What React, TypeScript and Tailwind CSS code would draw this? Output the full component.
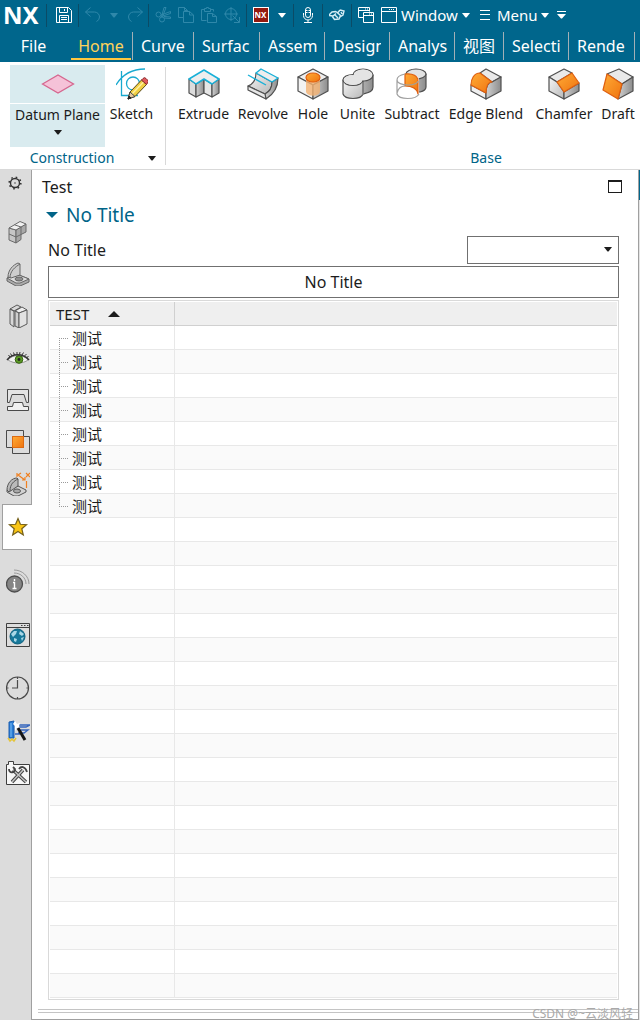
import type { ReactNode } from 'react'

type IconProps = { size?: number; box?: string; className?: string; children: ReactNode }

function Icon({ size = 16, box, className = '', children }: IconProps) {
  return (
    <svg
      width={size}
      height={size}
      viewBox={box ?? `0 0 ${size} ${size}`}
      fill="none"
      stroke="currentColor"
      className={`shrink-0 ${className}`}
      aria-hidden="true"
    >
      {children}
    </svg>
  )
}

function Caret({ className = '' }: { className?: string }) {
  return (
    <svg width="8" height="5" viewBox="0 0 8 5" className={`shrink-0 ${className}`} aria-hidden="true">
      <path d="M0 0h8L4.5 4.5h-1z" fill="currentColor" />
    </svg>
  )
}

function Separator() {
  return <span className="h-[23px] w-px shrink-0 bg-[#0b4b66]" />
}

function Gradients() {
  return (
    <svg width="0" height="0" className="absolute" aria-hidden="true">
      <defs>
        <linearGradient id="metal" x1="0" y1="0" x2="1" y2="1">
          <stop offset="0" stopColor="#f6f6f6" />
          <stop offset="1" stopColor="#b8b8b8" />
        </linearGradient>
        <linearGradient id="shade" x1="0" y1="0" x2="1" y2="0">
          <stop offset="0" stopColor="#d2d2d2" />
          <stop offset="1" stopColor="#8c8c8c" />
        </linearGradient>
        <linearGradient id="orange" x1="0" y1="0" x2="1" y2="1">
          <stop offset="0" stopColor="#ffab36" />
          <stop offset="1" stopColor="#ef7410" />
        </linearGradient>
      </defs>
    </svg>
  )
}

function TitleBar() {
  return (
    <div className="flex h-[30px] items-center overflow-hidden whitespace-nowrap text-[15px] text-white">
      <span className="w-[46px] shrink-0 pl-[3px] text-2xl leading-[30px] font-bold">NX</span>
      <Separator />
      <button aria-label="Save" className="flex w-[31px] shrink-0 justify-center pl-0.5">
        <Icon>
          <path d="M.5.5h12l3 3v12H.5zM3.500.5v5h8v-5M8.500 2v2M3.500 15.500v-7h9v7M5 10.500h6M5 12.500h6" />
        </Icon>
      </button>
      <Separator />
      <button aria-label="Undo" className="flex w-[27px] shrink-0 justify-center text-[#2f88aa]">
        <Icon>
          <path d="M5.500.5l-5 4.500 5 4.500M.5 5h9a5 5 0 0 1 5 5v0a5 5 0 0 1-3 4.500" />
        </Icon>
      </button>
      <button aria-label="Undo list" className="flex w-[15px] shrink-0 justify-center text-[#2f88aa]">
        <Caret />
      </button>
      <button aria-label="Redo" className="flex w-[27px] shrink-0 justify-center text-[#2f88aa]">
        <Icon>
          <path d="M10.500.5l5 4.500-5 4.500M15.500 5h-9a5 5 0 0 0-5 5v0a5 5 0 0 0 3 4.500" />
        </Icon>
      </button>
      <Separator />
      <div className="flex w-[97px] shrink-0 items-center justify-center gap-[7px] text-[#2f88aa]">
        <button aria-label="Cut">
          <Icon>
            <circle cx="3.500" cy="7.500" r="2.500" />
            <circle cx="7" cy="12.500" r="2.500" />
            <path d="M6 8l9.500-3.500v2L6 9.500M7.500 10L11 .5h-2L6.500 10M9 9.500l6.500.5v1.500L9 11" />
          </Icon>
        </button>
        <button aria-label="Copy">
          <Icon>
            <path d="M5.500 10.500h-5V.5h6l3 3v1M6.500.5v3h3M5.500 4.500h6l4 3.500v7.500h-10zM11.500 4.500V8h4" />
          </Icon>
        </button>
        <button aria-label="Paste">
          <Icon>
            <path d="M5.500 13.500h-5v-11h3M9.500 2.500h3v2M3.500 4.500v-3h2v-1h2v1h2v3zM6.500 6.500h5l4 3v6h-9zM11.500 6.500v3h4" />
          </Icon>
        </button>
        <button aria-label="Snap point">
          <Icon>
            <circle cx="7" cy="7" r="5.500" />
            <path d="M7 0v14M0 7h14M8.500 8.500l6.500 6.500M10 15.500h5.500V10" />
          </Icon>
        </button>
      </div>
      <Separator />
      <button aria-label="NX tools" className="flex w-[27px] shrink-0 justify-center">
        <span className="flex size-4 items-center justify-center border border-white bg-[#931a10] text-[8px] leading-none font-bold">
          NX
        </span>
      </button>
      <button aria-label="NX tools list" className="mr-1 flex w-[15px] shrink-0 justify-center">
        <Caret />
      </button>
      <Separator />
      <button aria-label="Voice command" className="flex w-7 shrink-0 justify-center">
        <Icon>
          <path d="M5.500 3a2.500 2.500 0 0 1 5 0v5a2.500 2.500 0 0 1-5 0zM5.500 3.500h2M5.500 5.500h2M8.500 3.500h2M8.500 5.500h2M3.500 6v2.500a4.500 4.500 0 0 0 9 0V6M8 13v2.500M4 15.500h8" />
        </Icon>
      </button>
      <Separator />
      <button aria-label="Touch mode" className="flex w-7 shrink-0 justify-center text-[#d5edf5]">
        <Icon>
          <path d="M0 8l3-3 4-.5M0 8.500l4 .5 3-2.500M3 9l2.500 3.500L10 12l1.500-3.500L7 4.500M6 8l3 3M11 3l4 1-1 4-3 2M11 3L9 5.500M12 5l1 2" strokeWidth="1.400" />
        </Icon>
      </button>
      <Separator />
      <button aria-label="Switch window" className="flex w-[26px] shrink-0 justify-center pl-0.5">
        <Icon>
          <path d="M5 10.500H.5V.5h11v4M.5 3.500h11M5.500 5.500h10v10h-10zM5.500 8.500h10M7 2h1M9 2h1M11 7h1M13 7h1" />
        </Icon>
      </button>
      <button className="flex w-[98px] shrink-0 items-center gap-1 pl-[3px]">
        <Icon>
          <path d="M.5.5h15v15H.5zM.5 4.500h15M8 2.500h1M10 2.500h1M12 2.500h1" />
        </Icon>
        <span className="w-[57px] text-left">Window</span>
        <Caret />
      </button>
      <button className="flex shrink-0 items-center pl-1">
        <Icon size={10} box="0 0 10 10">
          <path d="M0 .5h10M0 4.500h10M0 9.500h10" />
        </Icon>
        <span className="ml-[7px] w-11 text-left">Menu</span>
        <Caret />
      </button>
      <button aria-label="Customize toolbar" className="ml-2 shrink-0">
        <svg width="9" height="8" viewBox="0 0 9 8" aria-hidden="true">
          <path d="M0 0h9v1H0zM0 3h9L5 7.500H4z" fill="currentColor" />
        </svg>
      </button>
    </div>
  )
}

const tabs = [
  { label: 'Curve', width: 'w-[61px] pr-2' },
  { label: 'Surfac', width: 'w-[66px] pr-2' },
  { label: 'Assem', width: 'w-[65px] pr-1' },
  { label: 'Design', width: 'w-[65px] pr-2' },
  { label: 'Analys', width: 'w-[65px] pr-1' },
  { label: '视图', width: 'w-[49px] pr-2' },
  { label: 'Selecti', width: 'w-[65px] pr-2' },
  { label: 'Rende', width: 'w-[66px] pr-2' },
]

function TabBar() {
  return (
    <nav className="flex h-8 items-start overflow-hidden pt-px text-base leading-[30px] whitespace-nowrap text-white">
      <button className="w-[71px] shrink-0 pr-1">File</button>
      <button className="h-[29px] w-[60px] shrink-0 border-b-2 border-[#ffc840] text-[#ffd25a]">Home</button>
      <span className="mt-px ml-px h-7 w-px shrink-0 bg-[#a3b0b6]" />
      {tabs.map((tab) => (
        <button
          key={tab.label}
          className={`mt-px h-7 shrink-0 border-r border-[#a3b0b6] pl-2 text-left leading-7 ${tab.width}`}
        >
          <span className="block overflow-hidden">{tab.label}</span>
        </button>
      ))}
    </nav>
  )
}

const edge = { stroke: '#505050', strokeWidth: 1.2, strokeLinejoin: 'round' as const }
const cut = { fill: 'url(#orange)', stroke: '#df5f10' }

function SketchIcon() {
  return (
    <Icon size={32}>
      <path d="M5.500 3v24.500H22M0 17C6 7 15 1 29 1" stroke="#18a9cf" strokeWidth="1.300" />
      <circle cx="17" cy="15.500" r="6.500" stroke="#18a9cf" strokeWidth="1.300" />
      <path d="M14 24L25.500 12l5 4.500L19 28.500 12 31z" fill="#f1cf43" stroke="#5a4a1a" />
      <path d="M16 26L27.500 14" stroke="#fff0a0" strokeWidth="1.500" />
      <path d="M14 24l5 4.500L12 31z" fill="#e8c9a0" stroke="#444" />
      <path d="M12 31l1-3 2 2z" fill="#222" stroke="#222" />
      <path d="M25.500 12l1.500-1.500a2 2 0 0 1 3 0l1.500 1.500a2 2 0 0 1 0 3l-1 1.500z" fill="#e0595c" stroke="#8a2a2c" />
    </Icon>
  )
}

const baseTools = [
  {
    label: 'Extrude',
    width: 'w-[59px]',
    icon: (
      <g {...edge}>
        <path d="M1 11l7 5v13l-7-4z" fill="#dcdcdc" />
        <path d="M8 16l8-5v14l-8 4z" fill="url(#shade)" />
        <path d="M16 11l8 5v13l-8-4z" fill="#e6e6e6" />
        <path d="M31 11l-7 5v13l7-4z" fill="url(#shade)" />
        <path d="M1 11l15-9 15 9-7 5-8-5-8 5z" fill="#eee" stroke="#18b0d8" strokeWidth="1.500" />
      </g>
    ),
  },
  {
    label: 'Revolve',
    width: 'w-[60px]',
    icon: (
      <g {...edge}>
        <path d="M9 5l16 9c0 6-3 10-7 12L1 18c5-2 8-7 8-13z" fill="url(#metal)" />
        <path d="M25 14l6-4c0 9-4 16-12 21l-1-5c4-2 7-6 7-12z" fill="url(#shade)" />
        <path d="M1 18l17 8 1 5L1 22z" fill="#e8e8e8" />
        <path d="M9 5l5-4 17 9-6 4z" fill="#eee" stroke="#18b0d8" strokeWidth="1.400" />
        <path d="M1 7l18 10" stroke="#18b0d8" strokeWidth="1.400" />
      </g>
    ),
  },
  {
    label: 'Hole',
    width: 'w-[40px]',
    icon: (
      <g {...edge}>
        <path d="M16 1l15 8-15 8L1 9z" fill="#eee" />
        <path d="M1 9l15 8v14L1 23z" fill="#f2f2f2" />
        <path d="M31 9l-15 8v14l15-8z" fill="url(#shade)" />
        <path d="M9 10v14c2 5 12 5 14 0V10z" fill="#f2b071" fillOpacity=".8" stroke="none" />
        <ellipse cx="16" cy="9.500" rx="7" ry="4.500" {...cut} />
      </g>
    ),
  },
  {
    label: 'Unite',
    width: 'w-[49px]',
    icon: (
      <g {...edge}>
        <path d="M11 7v17c4 4 20 2 20-5V7z" fill="url(#shade)" />
        <path d="M1 12v14c2 6 18 6 20 0V12z" fill="url(#metal)" />
        <path d="M21 14v13" stroke="#8a8a8a" />
        <ellipse cx="21" cy="7" rx="10" ry="6" />
        <ellipse cx="11" cy="12" rx="10" ry="5.500" />
        <g fill="#e4e4e4" stroke="none">
          <ellipse cx="21" cy="7" rx="9.400" ry="5.400" />
          <ellipse cx="11" cy="12" rx="9.400" ry="4.900" />
        </g>
      </g>
    ),
  },
  {
    label: 'Subtract',
    width: 'w-[60px]',
    icon: (
      <g {...edge}>
        <path d="M10 6v18h14c4-1 6-3 6-5V6z" fill="url(#shade)" />
        <ellipse cx="20" cy="6" rx="10" ry="5" fill="#e2e2e2" />
        <path d="M1 12C1 4 23 4 23 12v14c-2 6-20 6-22 0z" fill="#fff" stroke="none" />
        <path d="M9 6c8-1 13 2 13 7v13c-1-5-6-8-13-8z" {...cut} />
        <path d="M9 6C4 7 1 9 1 12v14c2 6 19 6 22 0M1 12c0 3 5 5 11 5s10-2 10-4M1 25c1-4 4-7 8-7" stroke="#a0a0a0" />
      </g>
    ),
  },
  {
    label: 'Edge Blend',
    width: 'w-[88px]',
    icon: (
      <g {...edge}>
        <path d="M16 1l15 8-9 5-12-9z" fill="#e9e9e9" />
        <path d="M1 17v6l15 8v-6z" fill="#f0f0f0" />
        <path d="M31 9v14l-15 8v-6c0-6 2-11 6-11z" fill="url(#shade)" />
        <path d="M10 5l12 9c-4 0-6 5-6 11L1 17C1 11 4 5 10 5z" {...cut} />
      </g>
    ),
  },
  {
    label: 'Chamfer',
    width: 'w-[68px]',
    icon: (
      <g {...edge}>
        <path d="M16 1l8 4-15 9-8-5z" fill="#e9e9e9" />
        <path d="M1 9l8 5 7 10v7L1 23z" fill="url(#metal)" />
        <path d="M31 15v8l-15 8v-7z" fill="url(#shade)" />
        <path d="M24 5l7 10-15 9-7-10z" {...cut} />
      </g>
    ),
  },
  {
    label: 'Draft',
    width: 'w-[40px]',
    icon: (
      <g {...edge}>
        <path d="M17 1l14 8-11 7L5 6z" fill="#e9e9e9" />
        <path d="M31 9v14l-15 8 4-15z" fill="url(#shade)" />
        <path d="M5 6l15 10-4 15-15-9z" {...cut} />
      </g>
    ),
  },
]

function Ribbon() {
  return (
    <div className="flex h-[107px] overflow-hidden text-sm whitespace-nowrap text-[#1c1c1c]">
      <div className="w-[165px] shrink-0 pt-[3px] pl-[10px]">
        <div className="flex items-start">
          <button className="flex h-[82px] w-[95px] flex-col items-center bg-[#d9ebef]">
            <span className="flex h-[39px] w-full items-center justify-center border-b border-white">
              <svg width="34" height="20" viewBox="0 0 34 20" aria-hidden="true">
                <path d="M1.500 10L17 1l15.500 9L17 19z" fill="#f5c2d8" stroke="#d5678f" strokeWidth="1.300" />
              </svg>
            </span>
            <span className="leading-[22px]">Datum Plane</span>
            <Caret className="mt-1" />
          </button>
          <button className="flex w-[53px] flex-col items-center pt-[3px]">
            <SketchIcon />
            <span className="mt-[3px] leading-[22px]">Sketch</span>
          </button>
        </div>
        <div className="mt-px flex h-5 items-center text-[#006488]">
          <span className="w-[125px] pr-px text-center leading-5">Construction</span>
          <button aria-label="Construction options" className="ml-[13px] text-[#1c1c1c]">
            <Caret />
          </button>
        </div>
      </div>
      <span className="mt-[5px] h-[98px] w-px shrink-0 bg-[#d9d9d9]" />
      <div className="flex flex-1 flex-col pt-[6px] pl-2">
        <div className="flex">
          {baseTools.map((tool) => (
            <button key={tool.label} className={`flex shrink-0 flex-col items-center ${tool.width}`}>
              <Icon size={32}>{tool.icon}</Icon>
              <span className="mt-[3px] leading-[22px]">{tool.label}</span>
            </button>
          ))}
        </div>
        <span className="mt-[23px] w-[624px] text-center leading-5 text-[#006488]">Base</span>
      </div>
    </div>
  )
}

const sideItems = [
  {
    label: 'Settings',
    height: 'mb-[15px] h-[26px]',
    icon: (
      <g stroke="#333" strokeWidth="1.400">
        <circle cx="9" cy="12" r="4.500" />
        <circle cx="9" cy="12" r="5.800" strokeWidth="1.600" strokeDasharray="1.600 2.955" />
        <path d="M8.500 12h1" />
      </g>
    ),
  },
  {
    label: 'Assembly navigator',
    height: 'h-[42px]',
    icon: (
      <g stroke="#6a6a6a" strokeLinejoin="round">
        <path d="M3 8l7 2v13l-7-3z" fill="#c6c6c6" />
        <path d="M10 10l10-6v8l-5 2.500v5L10 23z" fill="#a8a8a8" />
        <path d="M3 8l11-6.500L20 4l-10 6z" fill="#f0f0f0" />
        <path d="M3 14l7 3 5-2.500V7L8.500 4.800" />
      </g>
    ),
  },
  {
    label: 'Part navigator',
    height: 'h-[42px]',
    icon: (
      <g stroke="#666" strokeLinejoin="round">
        <path d="M1 16l12-3 10 4v3l-9 4h-4l-9-5z" fill="#ababab" />
        <path d="M1 16l12-3 10 4-9 4h-4z" fill="#dcdcdc" />
        <path d="M2 15C2 8 7 3 12 1l2 1v11L5 16z" fill="#cdcdcd" />
        <path d="M4 16c0-7 5-11 10-14" />
        <ellipse cx="13" cy="17" rx="4" ry="2" fill="#8e8e8e" />
      </g>
    ),
  },
  {
    label: 'Reuse library',
    height: 'h-[42px]',
    icon: (
      <g stroke="#5a5a5a" strokeLinejoin="round">
        <path d="M4 5l7-4 4 2-7 4zM4 5l4 2v16l-4-3z" fill="#d8d8d8" />
        <path d="M9 7l7-4 5 3-8 3z" fill="#eee" />
        <path d="M9 7l4 2v15l-4-2z" fill="#cfcfcf" />
        <path d="M13 9l8-3v14l-8 4z" fill="#e2e2e2" />
      </g>
    ),
  },
  {
    label: 'View manager',
    height: 'h-[42px]',
    icon: (
      <g>
        <path d="M2 14C7 8 17 8 22 14 17 18 8 18 2 14z" fill="#f2f2f2" stroke="#999" />
        <circle cx="13" cy="13.500" r="3.800" fill="#5d9a28" stroke="#35640f" />
        <circle cx="13" cy="13.500" r="1.400" fill="#222" stroke="none" />
        <path d="M1 14C6 7 17 7 23 14" stroke="#333" strokeWidth="1.500" />
        <path d="M4 11L2.500 9M6 10L4.500 7.500M8.500 9L7.500 6.500M11 8.500V6M13.500 8.500L14 6M16 9l1.500-2.500M18.500 10L20.500 8M20.500 12l2-2" stroke="#333" />
      </g>
    ),
  },
  {
    label: 'Mold wizard',
    height: 'h-[42px]',
    icon: (
      <g stroke="#4a4a4a">
        <path d="M1.500 1.500h21v13h-2l-2.500-8H6l-2.500 8h-2z" fill="#e4e4e4" />
        <path d="M1.500 22.500v-4h5l1-4h9l1 4h5v4z" fill="#f0f0f0" />
      </g>
    ),
  },
  {
    label: 'Overlap check',
    height: 'h-[42px]',
    icon: (
      <g stroke="#4a4a4a">
        <path d="M.5.5h17v17H.5z" />
        <path d="M6.500 6.500h17v17h-17z" />
        <path d="M6.500 6.500h11v11h-11z" fill="url(#orange)" stroke="#df6a10" />
      </g>
    ),
  },
  {
    label: 'Dimensions',
    height: 'h-[41px]',
    icon: (
      <g stroke="#555" strokeLinejoin="round">
        <path d="M1 18l11-4 8 4v2l-8 4H8l-7-4z" fill="#d2d2d2" />
        <path d="M1 18C1 11 6 6 11 6l1 1v7L3 20z" fill="#bababa" />
        <path d="M4 19c0-7 4-10 8-12" />
        <ellipse cx="11" cy="19" rx="3.500" ry="2" fill="#aaa" />
        <path d="M11 1v4M15 1l-3 2 3 2M12 3l7 5M19 5v3h-3M20 1l4 4M24 1l-4 4M20.500 9v7" stroke="#f08020" strokeWidth="1.200" />
      </g>
    ),
  },
  {
    label: 'Favorites',
    height: 'h-[46px]',
    active: true,
    icon: (
      <path d="M12 3.500l2.400 5.800 6.100.4-4.700 4 1.500 6.300L12 16.500 6.700 20l1.500-6.300-4.700-4 6.100-.4z" fill="#f9c515" stroke="#75601b" strokeWidth="1.200" />
    ),
  },
  {
    label: 'Information',
    height: 'h-[62px]',
    icon: (
      <>
        <circle cx="8.500" cy="15" r="8" fill="#858585" stroke="#4e4e4e" strokeWidth="1.300" />
        <path d="M8.500 10v2M7 13.500h1.500v6M6.500 19.500h4" stroke="#fff" strokeWidth="1.400" />
        <path d="M8 1c8 0 15 6 15 14M8 4c7 0 12 5 12 11" stroke="#9a9a9a" />
      </>
    ),
  },
  {
    label: 'Web browser',
    height: 'h-[46px]',
    icon: (
      <>
        <path d="M.5.500h23v23H.5z" fill="#ddd" stroke="#404040" />
        <path d="M.5 4.500h23M15 2.500h1.500M18 2.500h1.500M21 2.500h1.500" stroke="#404040" />
        <circle cx="11.500" cy="13.500" r="7.500" fill="#17789a" stroke="#0e607e" />
        <path d="M5 11l3-3h3l-1 3-3 3zM8 15l3 1-1 3-2-1zM14 8l4 3-2 2-3-2zM15 15l3-1-2 4z" fill="#a9d7e6" stroke="none" />
      </>
    ),
  },
  {
    label: 'History',
    height: 'h-[60px]',
    icon: (
      <g stroke="#4a4a4a" strokeWidth="1.200">
        <circle cx="11.500" cy="12" r="11" />
        <path d="M11.500 4v8H6M11.500 1v2M11.500 21v2M.5 12h2M20.500 12h2" />
      </g>
    ),
  },
  {
    label: 'Process studio',
    height: 'h-[28px]',
    icon: (
      <>
        <path d="M3 2l5-1v17H3z" fill="#287bd4" stroke="#1c5eb0" />
        <path d="M5 3v14" stroke="#7ec0f5" />
        <path d="M9 5h15l-4 2h-9M12 10h10l-4 3h-6M9 14h5" stroke="#3565bd" strokeWidth="1.300" />
        <path d="M2 18l2 3 2-2 2 2 2-3" stroke="#e5c53a" strokeWidth="1.500" />
        <path d="M9 1l2 3 3-1-1 3 2 4-4-2-2 3V6L7 4z" fill="#fff" stroke="none" />
        <path d="M12 8l7 12" stroke="#151515" strokeWidth="3" />
      </>
    ),
  },
  {
    label: 'Customize',
    height: 'h-[54px]',
    icon: (
      <>
        <path d="M.5 3.500h2v-3h5v3h16v20H.5z" fill="#f7f7f7" stroke="#3e3e3e" />
        <path d="M7 9l13 12M17 9L6 21" stroke="#454545" strokeWidth="3.500" />
        <path d="M7 9l13 12M17 9L6 21" stroke="#c4c4c4" strokeWidth="1.500" />
        <path d="M3 8c0 5 6 4 6 0l-2-2M13 8c2-3 6-3 8 3" stroke="#454545" strokeWidth="1.800" />
      </>
    ),
  },
]

function SideBar() {
  return (
    <aside className="flex w-8 shrink-0 flex-col border-r border-[#a0a0a0] bg-[#dcdcdc]">
      {sideItems.map((item) => (
        <button
          key={item.label}
          aria-label={item.label}
          className={
            item.active
              ? `-mr-px ml-0.5 flex shrink-0 items-center border border-r-0 border-[#a0a0a0] bg-white pl-[3px] ${item.height}`
              : `flex shrink-0 items-center pl-[6px] ${item.height}`
          }
        >
          <Icon size={24}>{item.icon}</Icon>
        </button>
      ))}
    </aside>
  )
}

const rows = Array.from({ length: 28 }, (_, i) => (i < 8 ? '测试' : ''))

function Branch({ first, last }: { first: boolean; last: boolean }) {
  return (
    <svg width="10" height="24" viewBox="0 0 10 24" className="shrink-0" aria-hidden="true">
      <path
        d={`M.5 ${first ? 12 : 0}V${last ? 13 : 24}M0 12.500h10`}
        stroke="#9a9a9a"
        strokeDasharray="1 1"
        fill="none"
      />
    </svg>
  )
}

function TestTable() {
  return (
    <div className="mt-0.5 border border-[#d9d9d9] p-px text-[15px]">
      <table className="w-full table-fixed border-separate border-spacing-0">
        <thead>
          <tr className="h-6 bg-[#efefef]">
            <th className="w-[125px] border-r border-b border-[#d0d0d0] p-0 pl-[6px] text-left font-normal">
              <button className="flex items-center gap-[19px] leading-[22px]">
                TEST
                <svg width="12" height="6" viewBox="0 0 12 6" aria-hidden="true">
                  <path d="M6 0l6 6H0z" fill="#1c1c1c" />
                </svg>
              </button>
            </th>
            <th className="border-b border-[#d0d0d0] p-0" />
          </tr>
        </thead>
        <tbody>
          {rows.map((name, i) => (
            <tr key={i} className="h-6 even:bg-[#fafafa]">
              <td className="h-6 border-r border-b border-[#e8e8e8] p-0">
                {name && (
                  <div className="-mb-px flex h-6 items-center gap-[3px] pl-[9px]">
                    <Branch first={i === 0} last={i === 7} />
                    <span className="leading-6">{name}</span>
                  </div>
                )}
              </td>
              <td className="h-6 border-b border-[#e8e8e8] p-0" />
            </tr>
          ))}
        </tbody>
      </table>
    </div>
  )
}

function Panel() {
  return (
    <main className="flex min-w-0 flex-1 flex-col bg-white text-base text-[#1c1c1c]">
      <div className="flex h-[33px] items-center justify-between pr-4 pl-[10px]">
        <span>Test</span>
        <button aria-label="Maximize" className="h-[13px] w-[14px] border border-t-2 border-[#1c1c1c]" />
      </div>
      <button className="flex h-6 items-center gap-2 pl-[14px] text-[19px] leading-6 text-[#006488]">
        <svg width="12" height="6" viewBox="0 0 12 6" aria-hidden="true">
          <path d="M0 0h12L6 6z" fill="currentColor" />
        </svg>
        No Title
      </button>
      <div className="pt-[9px] pr-[19px] pl-4">
        <div className="flex h-7 items-center justify-between">
          <label htmlFor="option">No Title</label>
          <div className="relative">
            <select id="option" className="block h-7 w-[152px] appearance-none border border-[#707070] bg-white px-2">
              <option value="" />
            </select>
            <Caret className="pointer-events-none absolute top-[11px] right-[7px]" />
          </div>
        </div>
        <button className="mt-0.5 h-8 w-full border border-[#707070]">No Title</button>
        <TestTable />
      </div>
      <div className="mt-[9px] ml-[6px] h-1 border-y border-[#c4c4c4]" />
      <div className="relative h-[7px] border-b border-[#a0a0a0]">
        <span className="absolute right-[5px] -bottom-[3px] text-xs leading-4 whitespace-nowrap text-[#a9a9a9]">
          CSDN @~云淡风轻
        </span>
      </div>
    </main>
  )
}

export default function App() {
  return (
    <div className="min-h-screen bg-white pb-[5px] font-['Noto_Sans','Noto_Sans_CJK_SC',sans-serif] text-[15px]">
      <Gradients />
      <header className="bg-[#00668c]">
        <TitleBar />
        <TabBar />
      </header>
      <Ribbon />
      <div className="flex border-t border-[#d9d9d9]">
        <SideBar />
        <Panel />
        <div className="w-0.5 shrink-0 border-l border-[#a0a0a0] bg-[#e4e4e4]">
          <div className="h-[30px] bg-[#00668c]" />
        </div>
      </div>
    </div>
  )
}
